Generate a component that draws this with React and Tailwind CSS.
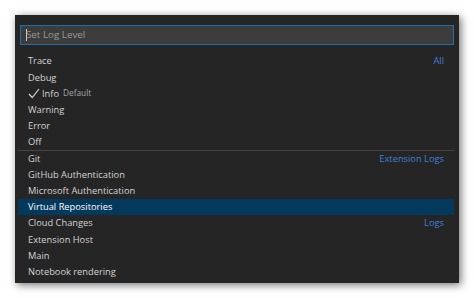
import React from "react";

const Row = ({ children, right, active, sep }) => (
  <div
    className={`flex items-center h-[16.2px] pl-[10px] pr-[10px] ${active ? "bg-[#04395e] text-white" : "text-[#d4d4d4]"} ${sep ? "border-t border-[#454545]" : ""}`}
  >
    <div className="flex-1 flex items-center">{children}</div>
    {right && <span className="text-[#3f7fd8]">{right}</span>}
  </div>
);

export default function App() {
  return (
    <div
      className="w-[474px] h-[298px] bg-white pt-[15px] pl-[15px]"
      style={{ fontFamily: '"Open Sans", "Noto Sans", sans-serif' }}
    >
      <div className="w-[444px] h-[268px] bg-[#252526] shadow-[2px_2px_8px_rgba(0,0,0,0.55)] pt-[10px] pl-[3px] pr-[3px] text-[9.3px] leading-none">
        <div className="mx-[2px] h-[20px] border border-[#1f6fa8] bg-[#3c3c3c] flex items-center pl-[5px] text-[#9a9a9a] text-[9.8px]">
          <span className="w-px h-[12px] bg-[#cccccc] mr-[-1px]"></span>
          <span>Set Log Level</span>
        </div>
        <div className="mt-[8px] mr-[2px]">
          <Row right="All">Trace</Row>
          <Row>Debug</Row>
          <Row>
            <svg width="12" height="11" viewBox="0 0 12 11" className="mr-[2px]">
              <path d="M1 6 L4.2 9.5 L11 1" fill="none" stroke="#d4d4d4" strokeWidth="1.2" />
            </svg>
            <span>Info</span>
            <span className="ml-[4px] text-[8.3px] text-[#a6a6a6]">Default</span>
          </Row>
          <Row>Warning</Row>
          <Row>Error</Row>
          <Row>Off</Row>
          <Row sep right="Extension Logs">Git</Row>
          <Row>GitHub Authentication</Row>
          <Row>Microsoft Authentication</Row>
          <Row active>Virtual Repositories</Row>
          <Row right="Logs">Cloud Changes</Row>
          <Row>Extension Host</Row>
          <Row>Main</Row>
          <Row>Notebook rendering</Row>
        </div>
      </div>
    </div>
  );
}
